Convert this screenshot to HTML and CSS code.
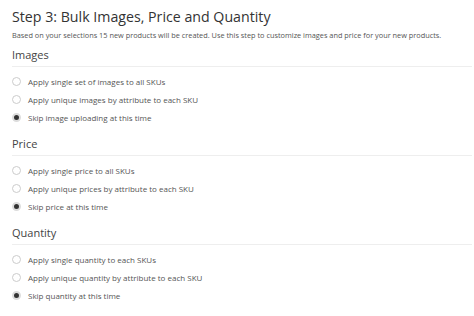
FILE: index.html
```html
<!DOCTYPE html>
<html lang="en">

<head>
    <meta charset="UTF-8">
    <meta name="viewport" content="width=device-width, initial-scale=1.0">
    <title>Bulk Images, Price and Quantity</title>
    <link rel="stylesheet" href="styles.css">
</head>

<body>
    <div class="step">
        <h2 class="step-title">Step 3: Bulk Images, Price and Quantity</h2>
        <p class="step-note">Based on your selections 15 new products will be created. Use this step to customize images and price for your new products.</p>

        <div class="section">
            <h3 class="section-title">Images</h3>
            <label class="option"><span class="radio"></span>Apply single set of images to all SKUs</label>
            <label class="option"><span class="radio"></span>Apply unique images by attribute to each SKU</label>
            <label class="option"><span class="radio checked"></span>Skip image uploading at this time</label>
        </div>

        <div class="section">
            <h3 class="section-title">Price</h3>
            <label class="option"><span class="radio"></span>Apply single price to all SKUs</label>
            <label class="option"><span class="radio"></span>Apply unique prices by attribute to each SKU</label>
            <label class="option"><span class="radio checked"></span>Skip price at this time</label>
        </div>

        <div class="section">
            <h3 class="section-title">Quantity</h3>
            <label class="option"><span class="radio"></span>Apply single quantity to each SKUs</label>
            <label class="option"><span class="radio"></span>Apply unique quantity by attribute to each SKU</label>
            <label class="option"><span class="radio checked"></span>Skip quantity at this time</label>
        </div>
    </div>
</body>

</html>
```

FILE: styles.css
```css
body {
    font-family: "Open Sans", sans-serif;
    margin: 0;
    padding: 0;
    background-color: #fff;
    color: #555;
}

.step {
    padding: 7px 2px 0 12px;
}

.step-title {
    margin: 0;
    font-size: 14.2px;
    font-weight: 400;
    line-height: 20px;
    color: #333;
}

.step-note {
    margin: 3px 0 -3px;
    font-size: 7.35px;
    line-height: 10px;
    color: #555;
}

.section {
    display: flex;
    flex-direction: column;
    padding-top: 10px;
}

.section-title {
    margin: 0;
    padding-bottom: 3px;
    border-bottom: 1px solid #eee;
    font-size: 11px;
    font-weight: 400;
    line-height: 16px;
    color: #444;
}

.section-title + .option {
    margin-top: 5px;
}

.option {
    display: flex;
    align-items: center;
    gap: 7px;
    height: 18px;
    font-size: 8px;
    color: #555;
}

.radio {
    box-sizing: border-box;
    width: 9px;
    height: 9px;
    border: 1px solid #ccc;
    border-radius: 50%;
    background-color: #fff;
}

.radio.checked {
    border: 2px solid #ddd;
    background-color: #333;
}
```
